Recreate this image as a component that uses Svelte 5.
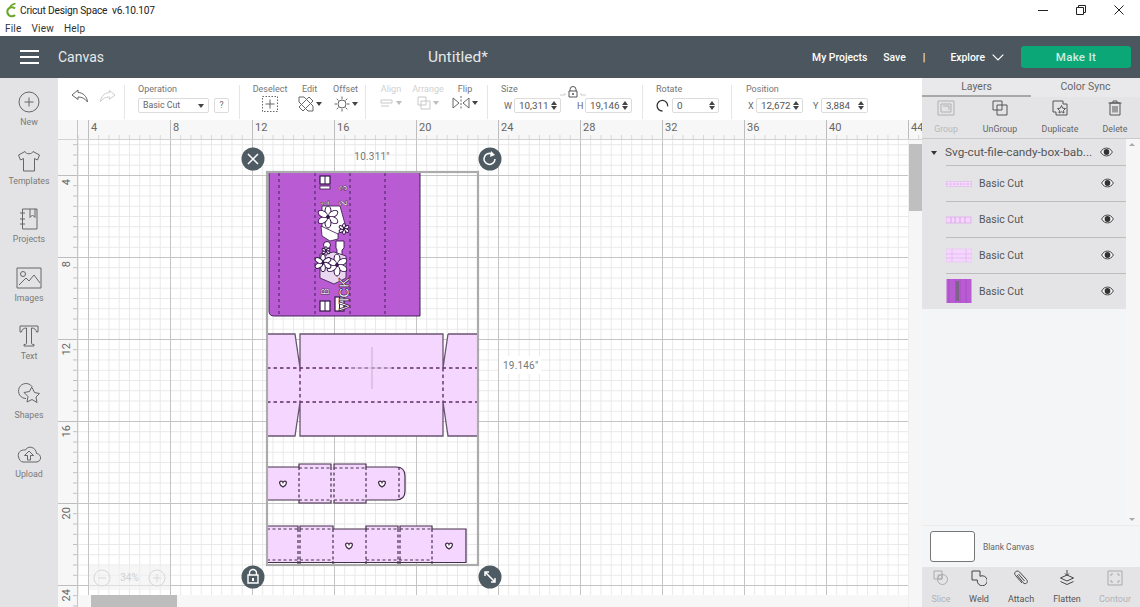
<script>
  const menus = ['File', 'View', 'Help'];
  const hTicks = [4, 8, 12, 16, 20, 24, 28, 32, 36, 40, 44];
  const vTicks = [4, 8, 12, 16, 20, 24];
  const layers = ['a', 'b', 'c', 'd'];
  const petals = [0, 60, 120, 180, 240, 300];
  const flowers = [[328, 217, 10], [337, 265, 10], [323, 263, 8], [344, 229, 5], [326, 251, 4]];
  const gifts = [[320, 176, 10, 8], [320, 301, 10, 10], [335, 297, 9, 14]];
</script>

{#snippet eye()}
  <svg class="eye" viewBox="0 0 14 10" width="13" height="10">
    <path d="M.7 5C2.4 2 4.5.8 7 .8S11.600 2 13.300 5C11.600 8 9.500 9.200 7 9.200S2.400 8 .7 5Z" fill="#fff" stroke="#333" stroke-width="1"/>
    <circle cx="7" cy="5" r="3.100" fill="#333"/>
  </svg>
{/snippet}

{#snippet spinner()}
  <span class="spin"><i class="up"></i><i class="down"></i></span>
{/snippet}

<div class="app">
  <div class="titlebar">
    <svg class="logo" viewBox="0 0 14 16" width="14" height="16">
      <path d="M11 6.500A4.500 4.500 0 1 0 11 13" fill="none" stroke="#6aa626" stroke-width="2.200"/>
      <path d="M6 5C7 3 9 2 11.500 1.500" fill="none" stroke="#6aa626" stroke-width="1.400"/>
    </svg>
    <span class="apptitle">Cricut Design Space&nbsp; v6.10.107</span>
    <div class="winctl">
      <svg viewBox="0 0 10 10" width="10" height="10"><path d="M0 5.500H10" stroke="#222" fill="none"/></svg>
      <svg viewBox="0 0 10 10" width="10" height="10"><path d="M.5 2.500H7.500V9.500H.5ZM2.500 2.500V.5H9.500V7.500H7.500" stroke="#222" fill="none"/></svg>
      <svg viewBox="0 0 10 10" width="10" height="10"><path d="M.5.5 9.500 9.500M9.500.5.5 9.500" stroke="#222" fill="none"/></svg>
    </div>
  </div>

  <div class="menubar">
    {#each menus as m}<span>{m}</span>{/each}
  </div>

  <header class="header">
    <div class="hleft">
      <div class="burger"><i></i><i></i><i></i></div>
      <span class="canvas-word">Canvas</span>
    </div>
    <span class="doc">Untitled*</span>
    <nav class="hright">
      <span class="myp">My Projects</span>
      <span class="save">Save</span>
      <span class="pipe">|</span>
      <span class="explore">Explore</span>
      <svg class="chev" viewBox="0 0 12 7" width="12" height="7"><path d="M.7.7 6 6 11.300.7" fill="none" stroke="#fff" stroke-width="1.200"/></svg>
      <button class="makeit">Make It</button>
    </nav>
  </header>

  <div class="body">
    <aside class="sidebar">
      <div class="tool">
        <svg viewBox="0 0 24 24" width="24" height="24"><circle cx="12" cy="12" r="10" /><path d="M12 7.500V16.500M7.500 12H16.500"/></svg>
        <span>New</span>
      </div>
      <div class="tool">
        <svg viewBox="0 0 24 24" width="24" height="24"><path d="M8 2.500 1.500 6 3.500 11 6.500 9.500V22H17.500V9.500L20.500 11 22.500 6 16 2.500C15 5.500 9 5.500 8 2.500Z"/></svg>
        <span>Templates</span>
      </div>
      <div class="tool">
        <svg viewBox="0 0 24 24" width="24" height="24"><path d="M5.500 2H20V22H5.500ZM3 6H8M3 12H8M3 17H8M13 2V10.500L15.500 8 18 10.500V2"/></svg>
        <span>Projects</span>
      </div>
      <div class="tool">
        <svg viewBox="0 0 26 24" width="26" height="24"><path d="M1 2H25V22H1Z"/><circle cx="7" cy="8" r="2.500"/><path d="M3 19 10 12 13 15 18 9 24 17"/></svg>
        <span>Images</span>
      </div>
      <div class="tool">
        <svg viewBox="0 0 24 24" width="24" height="24"><path d="M3 2H21V8H19.500C19 5.500 17.500 4 14.500 4V19.500C14.500 20 15.500 20.500 17 20.500V22H7V20.500C8.500 20.500 9.500 20 9.500 19.500V4C6.500 4 5 5.500 4.500 8H3Z"/></svg>
        <span>Text</span>
      </div>
      <div class="tool">
        <svg viewBox="0 0 24 24" width="24" height="24"><path d="M9 15.500A7.500 7.500 0 1 1 15 3.500L12.500 8.500 7 9.500 11 13.500 10 19 15 16.500 20 19.500 19 14 22.500 10.500 17.500 9.500 15 4.500"/></svg>
        <span>Shapes</span>
      </div>
      <div class="tool">
        <svg viewBox="0 0 24 24" width="24" height="24"><path d="M6 20H19C25 20 25 12 19.500 11.500 19 5 11 3 8.500 8 3 7.500 .5 11 1.500 15 2.200 18 4 20 6 20ZM12 9 7.500 13.500H10.500V18H13.500V13.500H16.500Z"/></svg>
        <span>Upload</span>
      </div>
    </aside>

    <main class="main">
      <div class="toolbar">
        <div class="group g-hist">
          <svg viewBox="0 0 18 14" width="18" height="14" class="ic"><path d="M7 1 1 6 7 10.500V8C11 8 14 9.500 16.500 13 16 7.500 12 3.500 7 3.500Z"/></svg>
          <svg viewBox="0 0 18 14" width="17" height="14" class="ic faint"><path d="M11 1 17 6 11 10.500V8C7 8 4 9.500 1.500 13 2 7.500 6 3.500 11 3.500Z"/></svg>
        </div>
        <div class="group g-op">
          <span class="lab">Operation</span>
          <div class="row">
            <div class="select">Basic Cut<i class="tri"></i></div>
            <div class="qm">?</div>
          </div>
        </div>
        <div class="group g-sel">
          <div class="col w-des">
            <span class="lab">Deselect</span>
            <svg viewBox="0 0 16 16" width="16" height="16" class="ic"><path d="M.5.5H15.500V15.500H.5Z" stroke-dasharray="1.500 1.500"/><path d="M8 3.500V12.500M3.500 8H12.500"/></svg>
          </div>
          <div class="col w-edit">
            <span class="lab">Edit</span>
            <div class="icn">
              <svg viewBox="0 0 16 16" width="16" height="16" class="ic"><path d="M1 11 11 1 15 5 5 15ZM1 1 6 1 15 10V15H10L1 6Z"/></svg><i class="tri"></i>
            </div>
          </div>
          <div class="col w-off">
            <span class="lab">Offset</span>
            <div class="icn">
              <svg viewBox="0 0 16 16" width="16" height="16" class="ic"><circle cx="8" cy="8" r="4"/><path d="M8 .5V3M8 13V15.500M.5 8H3M13 8H15.500M2.700 2.700 4.500 4.500M11.500 11.500 13.300 13.300M2.700 13.300 4.500 11.500M11.500 4.500 13.300 2.700"/></svg><i class="tri"></i>
            </div>
          </div>
        </div>
        <div class="group g-arr">
          <div class="col w-al off">
            <span class="lab">Align</span>
            <div class="icn">
              <svg viewBox="0 0 14 14" width="14" height="14" class="ic"><path d="M1 4H12V7H1ZM1 10H9"/></svg><i class="tri"></i>
            </div>
          </div>
          <div class="col w-ar off">
            <span class="lab">Arrange</span>
            <div class="icn">
              <svg viewBox="0 0 14 14" width="14" height="14" class="ic"><path d="M1 1H9V9H1ZM4 5H13V13H4Z"/></svg><i class="tri"></i>
            </div>
          </div>
          <div class="col w-fl">
            <span class="lab">Flip</span>
            <div class="icn">
              <svg viewBox="0 0 18 14" width="18" height="14" class="ic"><path d="M1 2 7 7 1 12ZM17 2 11 7 17 12Z"/><path d="M9 0V14" stroke-dasharray="2 1.500"/></svg><i class="tri"></i>
            </div>
          </div>
        </div>
        <div class="group g-size">
          <span class="lab">Size</span>
          <div class="row">
            <span class="axis">W</span>
            <div class="num w47">10,311{@render spinner()}</div>
            <span class="axis h">H</span>
            <div class="num w47">19,146{@render spinner()}</div>
          </div>
          <svg class="lock" viewBox="0 0 26 12" width="26" height="12">
            <path d="M0 9H5V7M21 7V9H26" fill="none" stroke="#ccc"/>
            <path d="M10 5V3.500A3 3 0 0 1 16 3.500V5M9 5H17V11H9Z" fill="#fff" stroke="#555"/>
            <circle cx="13" cy="8" r="1" fill="#555"/>
          </svg>
        </div>
        <div class="group g-rot">
          <span class="lab">Rotate</span>
          <div class="row">
            <svg viewBox="0 0 14 14" width="13" height="13" class="ic dark"><path d="M12.500 8A5.700 5.700 0 1 0 7 12.900"/></svg>
            <div class="num w47 ml4">0{@render spinner()}</div>
          </div>
        </div>
        <div class="group g-pos">
          <span class="lab">Position</span>
          <div class="row">
            <span class="axis x">X</span>
            <div class="num w47">12,672{@render spinner()}</div>
            <span class="axis y">Y</span>
            <div class="num w47">3,884{@render spinner()}</div>
          </div>
        </div>
      </div>

      <div class="hruler">
        <div class="corner"></div>
        <div class="hlead"></div>
        {#each hTicks as t}<div class="hcell">{t}</div>{/each}
      </div>

      <div class="work">
        <div class="vruler">
          <div class="vlead"></div>
          {#each vTicks as t}<div class="vcell"><span>{t}</span></div>{/each}
        </div>
        <div class="stage">
          <div class="grid"></div>
          <svg class="art" viewBox="78 140 830 455" width="830" height="455">
            <defs>
              <g id="heart">
                <path d="M0 3C-4.500 .5-4-2.800-1.800-2.800-.9-2.800-.3-2.300 0-1.500 .3-2.300 .9-2.800 1.800-2.800 4-2.800 4.500 .5 0 3Z" fill="#fff" stroke="#44304a" stroke-width="1.200"/>
              </g>
            </defs>

            <!-- purple sheet -->
            <path d="M269 172H420V316H274Q269 316 269 311Z" fill="#b95bd3" stroke="#43205a" stroke-width="1"/>
            {#each gifts as g}
              <rect x={g[0]} y={g[1]} width={g[2]} height={g[3]} fill="#fff" stroke="#35154a" stroke-width="1.200"/>
              <path d="M{g[0] + g[2] / 2} {g[1]}V{g[1] + g[3]}" stroke="#35154a"/>
            {/each}
            <rect x="320" y="186" width="10" height="3" fill="#fff" stroke="#35154a" stroke-width=".8"/>
            <path d="M322 206H340L345 224 336 237H328L322 226Z" fill="#fff" stroke="#35154a" stroke-width=".8"/>
            <path d="M321 226 338 234V239L330 241 322 236Z" fill="#fff" stroke="#35154a" stroke-width=".8"/>
            <circle cx="327" cy="245" r="3.500" fill="#fff" stroke="#35154a"/>
            <path d="M336 241H344V248L342 250V255H337V250L336 248Z" fill="#fff" stroke="#35154a" stroke-width=".9"/>
            <path d="M320 254 334 252 346 256V278L334 284 320 278Z" fill="#e9d6ef" stroke="#35154a" stroke-width=".8"/>
            {#each flowers as f}
              {#each petals as a}
                <ellipse cx={f[0]} cy={f[1] - f[2] * .6} rx={f[2] * .3} ry={f[2] * .5} transform="rotate({a} {f[0]} {f[1]})" fill="#fff" stroke="#35154a" stroke-width="1"/>
              {/each}
              <circle cx={f[0]} cy={f[1]} r={f[2] * .18} fill="#35154a"/>
            {/each}
            <text class="cut" transform="translate(329 206) rotate(-90)">1</text>
            <text class="cut" transform="translate(347 206) rotate(-90)">2</text>
            <text class="cut" transform="translate(347 191) rotate(-90)">3</text>
            <text class="cut" transform="translate(329 295) rotate(-90)">B</text>
            <text class="cutb" transform="translate(349 311) rotate(-90)">VICK</text>
            <g fill="none" stroke="#43205a" stroke-width="1" stroke-dasharray="3 3">
              <path d="M279 173V316M315 173V316M350 173V316M385 173V316"/>
            </g>

            <!-- wide box -->
            <path d="M267 334H295L300 368V402L295 436H267ZM448 334H477V436H448L443 402V368ZM300 334H443V436H300Z" fill="#f5d6ff"/>
            <path d="M267 334H295L300 368M300 402 295 436H267M448 334H477M477 436H448L443 402M443 368 448 334M300 368V334H443V368M300 402V436H443V402" fill="none" stroke="#6a5470" stroke-width="1.300"/>
            <g fill="none" stroke="#5c2f66" stroke-width="1.400" stroke-dasharray="3.500 3">
              <path d="M267 368H477M267 402H477M300 368V402M443 368V402"/>
            </g>
            <path d="M372 347V389" stroke="#c3b1c9" stroke-width="1"/>
            <path d="M352 368H392" stroke="#d7c0dd" stroke-width="1"/>

            <!-- strip one -->
            <path d="M267 467H299V464H331V467H334V464H366V467H396Q405 467 405 476V491Q405 500 396 500H366V503H334V500H331V503H299V500H267Z" fill="#f5d6ff"/>
            <path d="M267 467H299V464H331V467M334 467V464H366V467H396Q405 467 405 476V491Q405 500 396 500H366V503H334V500M331 500V503H299V500H267" fill="none" stroke="#44304a" stroke-width="1.200"/>
            <g fill="none" stroke="#44304a" stroke-width="1.200" stroke-dasharray="3 2.500">
              <path d="M299 468H331M334 468H366M299 500H331M334 500H366M299 467V500M331 467V500M334 467V500M366 467V500M399 467V500"/>
            </g>
            <use href="#heart" x="283" y="484"/>
            <use href="#heart" x="382" y="484"/>

            <!-- strip two -->
            <path d="M267 526H298V529H300V526H333V529H366V526H398V529H400V526H432V529H466V562H267Z" fill="#f5d6ff"/>
            <path d="M267 526H298V529M300 529V526H333V529H366V526H398V529M400 529V526H432V529H466V562.500H267" fill="none" stroke="#44304a" stroke-width="1.200"/>
            <path d="M298 561V564M300 561V564M333 561V564M366 561V564M398 561V564M400 561V564M432 561V564" stroke="#44304a" stroke-width="1.200"/>
            <g fill="none" stroke="#44304a" stroke-width="1.200" stroke-dasharray="3 2.500">
              <path d="M267 529H298M300 529H333M366 529H398M400 529H432M267 560H333M366 560H432M298 529V561M300 529V561M333 529V561M366 529V561M398 529V561M400 529V561M432 529V561"/>
            </g>
            <use href="#heart" x="349" y="546"/>
            <use href="#heart" x="449" y="546"/>

            <!-- selection -->
            <rect x="267" y="172" width="211" height="393" fill="none" stroke="#ababab" stroke-width="2.200"/>
            <text class="dim" x="372" y="160" text-anchor="middle">10.311"</text>
            <rect x="499" y="356" width="42" height="18" fill="#fff"/>
            <text class="dim" x="503" y="369">19.146"</text>

            <!-- handles -->
            <circle cx="253" cy="159" r="11.500" fill="#4f5b63"/>
            <path d="M248 154 258 164M258 154 248 164" stroke="#fff" stroke-width="1.500"/>
            <circle cx="490" cy="159" r="11.500" fill="#4f5b63"/>
            <path d="M495 159A5.500 5.500 0 1 1 492 154" fill="none" stroke="#fff" stroke-width="1.500"/>
            <path d="M491 151 495 155 490 157Z" fill="#fff"/>
            <circle cx="253" cy="577" r="11.500" fill="#4f5b63"/>
            <path d="M249.500 575V573A3.500 3.500 0 0 1 256.500 573V575M248 575H258V583H248Z" fill="none" stroke="#fff" stroke-width="1.400"/>
            <rect x="252" y="578" width="2" height="3" fill="#fff"/>
            <circle cx="490" cy="577" r="11.500" fill="#4f5b63"/>
            <path d="M485 572 495 582M485 576V572H489M495 578V582H491" fill="none" stroke="#fff" stroke-width="1.500"/>
          </svg>
          <div class="zoomer">
            <svg viewBox="0 0 18 18" width="18" height="18"><circle cx="9" cy="9" r="8"/><path d="M5 9H13"/></svg>
            <span>34%</span>
            <svg viewBox="0 0 18 18" width="18" height="18"><circle cx="9" cy="9" r="8"/><path d="M5 9H13M9 5V13"/></svg>
          </div>
          <div class="hscroll"><div class="hthumb"></div></div>
        </div>
        <div class="vscroll"><div class="vthumb"></div></div>
      </div>
    </main>

    <section class="panel">
      <div class="tabs">
        <div class="tab active">Layers</div>
        <div class="tab">Color Sync</div>
      </div>
      <div class="actions">
        <div class="act off g"><svg viewBox="0 0 18 16" width="18" height="16"><path d="M1 1H17V15H1ZM4 4H14V12H4ZM6 6H12V10"/></svg><span>Group</span></div>
        <div class="act u"><svg viewBox="0 0 16 16" width="16" height="16"><path d="M1 1H10V10H1ZM5 5H15V15H5Z"/></svg><span>UnGroup</span></div>
        <div class="act d"><svg viewBox="0 0 16 16" width="16" height="16"><path d="M1 1H11V4H15V15H4V12H1Z M9.500 5.500 10.700 8.200 13.500 8.500 11.500 10.500 12 13 9.500 11.700 7 13 7.500 10.500 5.500 8.500 8.300 8.200Z"/></svg><span>Duplicate</span></div>
        <div class="act t"><svg viewBox="0 0 14 16" width="14" height="16"><path d="M2 3H12V15H2ZM.5 3H13.500M5 3V1H9V3M5 6V12.500M7 6V12.500M9 6V12.500"/></svg><span>Delete</span></div>
      </div>
      <div class="list">
        <div class="items">
          <div class="parent">
            <i class="caret"></i>
            <span class="pname">Svg-cut-file-candy-box-bab...</span>
            {@render eye()}
          </div>
          {#each layers as l}
            <div class="layer">
              <div class="thumb">
                {#if l === 'a'}
                  <svg viewBox="0 0 26 26" width="26" height="26"><rect y="10.500" width="26" height="5" fill="#f5d6ff" stroke="#d8b4df" stroke-width=".5"/><path d="M0 13H26" stroke="#d9a8e0" stroke-dasharray="2 1.500"/></svg>
                {:else if l === 'b'}
                  <svg viewBox="0 0 26 26" width="26" height="26"><rect y="10" width="25" height="6" fill="#f5d6ff" stroke="#d8a6e2" stroke-width=".7"/><path d="M5 10V16M9 10V16M14 10V16M19 10V16" stroke="#d8a6e2"/></svg>
                {:else if l === 'c'}
                  <svg viewBox="0 0 26 26" width="26" height="26"><rect y="6" width="26" height="13" fill="#f5d6ff" stroke="#e6c4ee" stroke-width=".6"/><path d="M0 11H26M0 15H26M6 6V19M20 6V19" stroke="#e0b4ea" stroke-width=".7"/></svg>
                {:else}
                  <svg viewBox="0 0 26 26" width="26" height="26"><rect x=".5" width="25" height="24" fill="#b95bd3"/><rect x="10" y="2" width="3" height="20" fill="#7d6289"/><path d="M3 0V24M9.500 0V24M14 0V24M20 0V24" stroke="#9a46b5" stroke-width=".5"/></svg>
                {/if}
              </div>
              <span class="lname">Basic Cut</span>
              {@render eye()}
            </div>
          {/each}
        </div>
        <div class="lscroll"><i class="aup"></i><i class="adn"></i></div>
      </div>
      <div class="blank">
        <div class="swatch"></div>
        <span>Blank Canvas</span>
      </div>
      <div class="bottools">
        <div class="bt off"><svg viewBox="0 0 16 16" width="16" height="16"><path d="M1 1H9V9H1Z"/><circle cx="9.500" cy="9.500" r="5"/><path d="M5 5H9V9H5Z"/></svg><span>Slice</span></div>
        <div class="bt"><svg viewBox="0 0 16 16" width="16" height="16"><path d="M1 1H9V6.300A5 5 0 1 1 6.300 10H1Z"/></svg><span>Weld</span></div>
        <div class="bt"><svg viewBox="0 0 16 16" width="16" height="16"><path d="M4 5 10 12.500C12.500 15.500 16 12 13.500 9.500L6.500 2C4 -.5 0 2.500 2.500 5.500L9 13M5.500 4 11.500 11"/></svg><span>Attach</span></div>
        <div class="bt"><svg viewBox="0 0 16 16" width="16" height="16"><path d="M8 0V5M6 3.500 8 5.500 10 3.500M1.500 8 8 5 14.500 8 8 11ZM1.500 11.500 8 14.500 14.500 11.500"/></svg><span>Flatten</span></div>
        <div class="bt off"><svg viewBox="0 0 16 16" width="16" height="16"><path d="M1 1H15V15H1ZM4 6V4H6M10 4H12V6M12 10V12H10M6 12H4V10"/></svg><span>Contour</span></div>
      </div>
    </section>
  </div>
</div>

<style>
  :global(body) { margin: 0; background: #fff; }
  .app {
    width: 1140px; height: 607px; overflow: hidden;
    display: flex; flex-direction: column;
    font-family: Roboto, "Liberation Sans", sans-serif;
    color: #666;
  }
  i { display: block; }
  svg { display: block; flex: none; }

  .titlebar { height: 20px; display: flex; align-items: center; padding-left: 4px; background: #fff; }
  .logo { margin-top: -1px; }
  .apptitle { margin-left: 2px; font: 10.200px Roboto, sans-serif; letter-spacing: -.2px; color: #222; }
  .winctl { margin-left: auto; display: flex; gap: 28px; padding-right: 16px; }
  .winctl svg { width: 10px; }
  .menubar { height: 16px; display: flex; gap: 10px; padding-left: 5px; align-items: center; font: 10px Roboto, sans-serif; letter-spacing: .2px; color: #333; background: #fff; }

  .header { height: 42px; background: #4b565e; display: flex; align-items: center; color: #fff; flex: none; }
  .hleft { width: 428px; display: flex; align-items: center; flex: none; }
  .burger { margin-left: 20px; width: 19px; display: flex; flex-direction: column; gap: 4px; }
  .burger i { height: 2px; background: #fff; }
  .canvas-word { margin-left: 19px; font-size: 14px; color: #e8eaeb; }
  .doc { font-size: 15.500px; color: #e4e7e8; }
  .hright { margin-left: auto; display: flex; align-items: center; font-size: 10.400px; font-weight: 500; }
  .save { margin-left: 16px; }
  .pipe { margin-left: 17px; }
  .explore { margin-left: 25px; }
  .chev { margin-left: 7px; }
  .makeit {
    margin: 0 9px 0 17px; width: 110px; height: 22px; border: 0; border-radius: 3px;
    background: #0ca777; color: #cdeee2; font: 500 11.500px Roboto, sans-serif; letter-spacing: .3px;
  }

  .body { flex: 1; display: flex; min-height: 0; }

  .sidebar { width: 58px; flex: none; background: #e3e3e5; padding-top: 12px; box-sizing: border-box; display: flex; flex-direction: column; }
  .tool { height: 58.600px; display: flex; flex-direction: column; align-items: center; flex: none; color: #7a7a7a; font-size: 8.800px; }
  .tool svg { fill: none; stroke: #666; stroke-width: 1; }
  .tool span { margin-top: 3px; line-height: 11px; }

  .main { flex: 1; min-width: 0; display: flex; flex-direction: column; }
  .toolbar { height: 42px; flex: none; display: flex; background: #fff; }
  .group { position: relative; box-sizing: border-box; flex: none; }
  .group::after { content: ""; position: absolute; right: 0; top: 7px; bottom: 1px; width: 1px; background: #e6e6e6; }
  .g-pos::after { display: none; }
  .g-hist { width: 67px; padding: 11px 0 0 13px; display: flex; gap: 10px; }
  .g-op { width: 115px; padding: 6px 0 0 13px; }
  .g-sel, .g-arr { display: flex; padding-top: 6px; }
  .g-sel { width: 126px; padding-left: 12px; }
  .g-arr { width: 122px; padding-left: 6px; }
  .g-size { width: 155px; padding: 6px 0 0 13px; }
  .g-rot { width: 89px; padding: 6px 0 0 13px; }
  .g-pos { flex: 1; padding: 6px 0 0 14px; }
  .lab { display: block; font-size: 9px; line-height: 10px; color: #757575; }
  .col { display: flex; flex-direction: column; align-items: center; gap: 2px; }
  .w-des { width: 36px; }
  .w-edit { width: 35px; margin-left: 4px; }
  .w-off { width: 35px; margin-left: 1px; }
  .w-al { width: 38px; }
  .w-ar { width: 36px; }
  .w-fl { width: 38px; }
  .icn { display: flex; align-items: center; gap: 2px; }
  .tri { width: 0; height: 0; border: 3px solid transparent; border-top: 4px solid #444; border-bottom: 0; }
  .off { opacity: .35; }
  .ic { fill: none; stroke: #666; stroke-width: 1; }
  .ic.faint { stroke: #c8c8c8; }
  .ic.dark { stroke: #333; stroke-width: 1.400; }
  .row { display: flex; align-items: center; margin-top: 4px; }
  .select {
    width: 71px; height: 15px; box-sizing: border-box; border: 1px solid #dcdcdc; border-radius: 2px;
    font-size: 8.800px; line-height: 13px; padding-left: 4px; color: #666; display: flex; align-items: center; justify-content: space-between; padding-right: 4px;
  }
  .qm { margin-left: 5px; width: 15px; height: 15px; box-sizing: border-box; border: 1px solid #dcdcdc; border-radius: 2px; font-size: 8.500px; text-align: center; line-height: 13px; }
  .axis { width: 13px; font-size: 9px; color: #666; flex: none; padding-left: 3px; box-sizing: border-box; }
  .axis.h { margin-left: 16px; width: 8px; padding: 0; }
  .axis.x { width: 10px; padding-left: 2px; }
  .axis.y { margin-left: 10px; width: 8px; padding: 0; }
  .num {
    height: 15px; box-sizing: border-box; border: 1px solid #dcdcdc; border-radius: 2px;
    font-size: 9.800px; line-height: 13px; padding-left: 4px; color: #555; display: flex; align-items: center; justify-content: space-between;
  }
  .w47 { width: 47px; }
  .ml4 { margin-left: 3px; }
  .spin { display: flex; flex-direction: column; gap: 1px; padding-right: 3px; }
  .spin .up { width: 0; height: 0; border: 3px solid transparent; border-bottom: 4px solid #444; border-top: 0; }
  .spin .down { width: 0; height: 0; border: 3px solid transparent; border-top: 4px solid #444; border-bottom: 0; }
  .lock { position: absolute; left: 72px; top: 8px; }

  .hruler {
    height: 20px; flex: none; display: flex; background-color: #f7f7f7; overflow: hidden; border-bottom: 1px solid #d2d2d2; box-sizing: border-box;
    font-size: 11px; color: #666;
    background-image: linear-gradient(to right, #d6d6d6 1px, transparent 1px);
    background-size: 10.250px 4px; background-position: 30px bottom; background-repeat: repeat-x;
  }
  .corner { width: 20px; flex: none; border-right: 1px solid #c6c6c6; box-sizing: border-box; background: #f7f7f7; }
  .hlead { width: 10px; flex: none; }
  .hcell { width: 82px; flex: none; box-sizing: border-box; border-left: 1px solid #bdbdbd; padding-left: 2px; line-height: 15px; }

  .work { flex: 1; display: flex; min-height: 0; }
  .vruler {
    width: 20px; flex: none; box-sizing: border-box; background: #f7f7f7; overflow: hidden;
    border-right: 1px solid #c6c6c6;
    background-image: linear-gradient(to bottom, #bdbdbd 1px, transparent 1px);
    background-size: 4px 10.250px; background-position: right 4.250px; background-repeat: repeat-y;
    font-size: 11px; color: #666;
  }
  .vlead { height: 35px; }
  .vcell { height: 82px; box-sizing: border-box; border-top: 1px solid #bdbdbd; padding: 3px 0 0 2px; }
  .vcell span { display: block; writing-mode: vertical-rl; transform: rotate(180deg); line-height: 14px; }

  .stage { position: relative; width: 830px; flex: none; background: #fff; overflow: hidden; }
  .grid {
    height: 455px; background-color: #fff;
    background-image:
      linear-gradient(to right, #c4c4c4 1px, transparent 1px),
      linear-gradient(to bottom, #c4c4c4 1px, transparent 1px),
      linear-gradient(to right, #e8e8e8 1px, transparent 1px),
      linear-gradient(to bottom, #e8e8e8 1px, transparent 1px);
    background-size: 82px 82px, 82px 82px, 10.250px 10.250px, 10.250px 10.250px;
    background-position: 10px 0, 0 35px, 10px 0, 0 4.250px;
  }
  .art { position: absolute; left: 0; top: 0; }
  .cut { font: 700 10px "Liberation Sans", sans-serif; fill: #fff; stroke: #35154a; stroke-width: .5; }
  .cutb { font: 700 14px "Liberation Sans", sans-serif; fill: #fff; stroke: #35154a; stroke-width: .7; }
  .dim { font: 10px Roboto, sans-serif; fill: #777; letter-spacing: .2px; }
  .zoomer {
    position: absolute; left: 11px; top: 425px; width: 81px; height: 25px;
    background: rgba(240,240,240,.6); display: flex; align-items: center; justify-content: space-between;
    box-sizing: border-box; padding: 0 4px; font-size: 10px; color: #d0d0d0;
  }
  .zoomer svg { fill: none; stroke: #d8d8d8; stroke-width: 1; }
  .hscroll { height: 12px; background: #f7f7f7; }
  .hthumb { margin-left: 13px; width: 86px; height: 12px; background: #bdbdbd; }
  .vscroll { width: 14px; flex: none; background: #f6f6f6; border-left: 1px solid #eee; box-sizing: border-box; padding-top: 4px; }
  .vthumb { width: 13px; height: 67px; background: #bfbfbf; }

  .panel { width: 218px; flex: none; display: flex; flex-direction: column; background: #f4f5f7; }
  .tabs { height: 19px; display: flex; background: #e9e9eb; font-size: 10.500px; color: #666; flex: none; }
  .tab { width: 109px; text-align: center; line-height: 18px; box-sizing: border-box; }
  .tab.active { border-bottom: 2px solid #a8a8a8; }
  .actions { height: 42px; position: relative; background: #e4e4e6; border-bottom: 1px solid #c9c9c9; box-sizing: border-box; flex: none; font-size: 8.800px; }
  .act { position: absolute; top: 3px; width: 60px; margin-left: -30px; display: flex; flex-direction: column; align-items: center; color: #666; }
  .act svg { fill: none; stroke: #555; stroke-width: 1; }
  .act span { margin-top: 8px; line-height: 11px; }
  .act.g { left: 24px; } .act.u { left: 78px; } .act.d { left: 138px; } .act.t { left: 193px; }
  .list { flex: 1; display: flex; min-height: 0; }
  .items { width: 204px; flex: none; }
  .parent { height: 26px; display: flex; align-items: center; background: #e4e4e6; box-sizing: border-box; padding-left: 9px; font-size: 11.800px; color: #555; }
  .caret { width: 0; height: 0; border: 3.500px solid transparent; border-top: 4px solid #333; border-bottom: 0; margin-top: 1px; }
  .pname { margin-left: 8px; width: 155px; white-space: nowrap; flex: none; }
  .eye { margin-left: 0; flex: none; }
  .layer { position: relative; height: 36px; display: flex; align-items: center; background: #e4e4e6; padding-left: 24px; font-size: 10.500px; color: #555; box-sizing: border-box; }
  .layer::before { content: ""; position: absolute; left: 24px; right: 0; top: 0; height: 1px; background: #bdbdbd; }
  .thumb { width: 26px; height: 26px; flex: none; margin-top: 1px; }
  .lname { margin-left: 7px; width: 122px; flex: none; }
  .lscroll { width: 14px; flex: none; background: #f6f6f6; position: relative; }
  .aup, .adn { position: absolute; left: 3px; width: 0; height: 0; border: 3px solid transparent; }
  .aup { top: 4px; border-bottom: 3px solid #aaa; border-top: 0; }
  .adn { bottom: 4px; border-top: 3px solid #aaa; border-bottom: 0; }
  .blank { height: 42px; flex: none; display: flex; align-items: center; padding-left: 8px; border-top: 1px solid #ececec; box-sizing: border-box; font-size: 8.500px; color: #666; }
  .swatch { width: 45px; height: 31px; background: #fff; border: 1px solid #777; border-radius: 3px; box-sizing: border-box; }
  .blank span { margin-left: 8px; }
  .bottools { height: 40px; flex: none; background: #e4e4e6; position: relative; font-size: 9px; color: #555; }
  .bt { position: absolute; top: 3px; width: 40px; margin-left: -20px; display: flex; flex-direction: column; align-items: center; }
  .bt svg { fill: none; stroke: #444; stroke-width: 1; }
  .bt span { margin-top: 8px; line-height: 11px; }
  .bt:nth-child(1) { left: 19px; } .bt:nth-child(2) { left: 57px; } .bt:nth-child(3) { left: 99px; } .bt:nth-child(4) { left: 145px; } .bt:nth-child(5) { left: 193px; }
</style>
